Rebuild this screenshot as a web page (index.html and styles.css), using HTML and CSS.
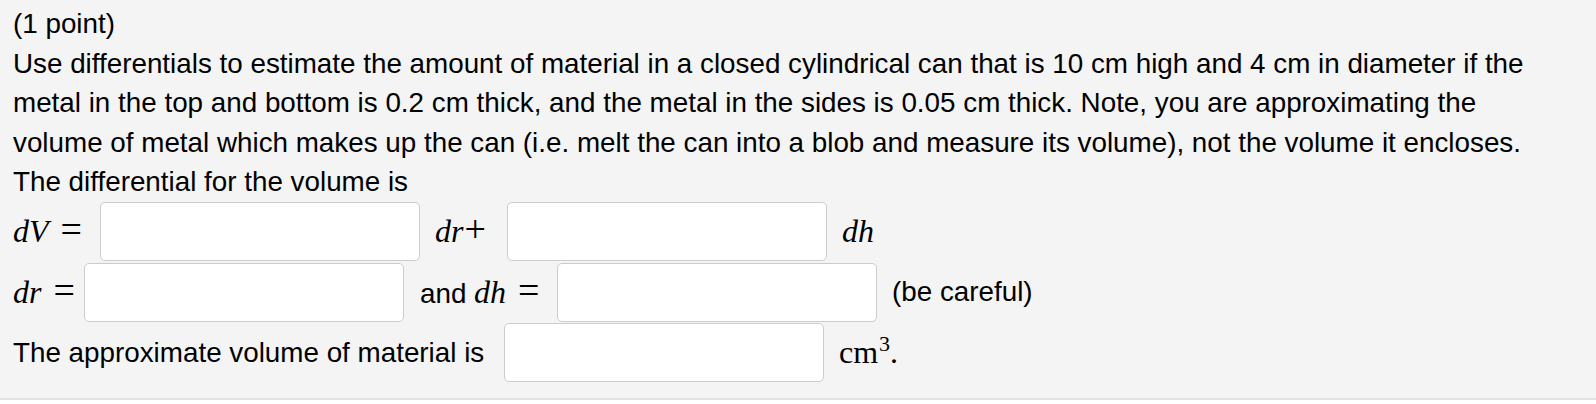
FILE: index.html
```html
<!DOCTYPE html>
<html>
<head>
<meta charset="utf-8">
<link rel="stylesheet" href="styles.css">
</head>
<body>
<div class="problem">
  <div class="text">
    <div>(1 point)</div>
    <div>Use differentials to estimate the amount of material in a closed cylindrical can that is 10 cm high and 4 cm in diameter if the metal in the top and bottom is 0.2 cm thick, and the metal in the sides is 0.05 cm thick. Note, you are approximating the volume of metal which makes up the can (i.e. melt the can into a blob and measure its volume), not the volume it encloses.</div>
    <div>The differential for the volume is</div>
  </div>
  <div class="row">
    <span class="cell w-dv"><span class="m">dV</span><span class="op rel">=</span></span>
    <input class="ans" type="text">
    <span class="cell w-drp"><span class="m">dr</span><span class="op bin">+</span></span>
    <input class="ans" type="text">
    <span class="cell after"><span class="m">dh</span></span>
  </div>
  <div class="row">
    <span class="cell w-dr"><span class="m">dr</span><span class="op rel">=</span></span>
    <input class="ans" type="text">
    <span class="cell w-and">and <span class="m">dh</span><span class="op rel">=</span></span>
    <input class="ans" type="text">
    <span class="cell after">(be careful)</span>
  </div>
  <div class="row">
    <span class="cell w-vol">The approximate volume of material is</span>
    <input class="ans" type="text">
    <span class="cell after unit">cm<sup>3</sup>.</span>
  </div>
</div>
</body>
</html>
```

FILE: styles.css
```css
html, body {
  margin: 0;
  padding: 0;
  background: #ffffff;
}

.problem {
  width: 1596px;
  height: 400px;
  box-sizing: border-box;
  background: #f4f4f4;
  border-bottom: 2px solid #e2e2e2;
  padding: 4px 36px 0 13px;
  font-family: "Liberation Sans", Arial, sans-serif;
  font-size: 27.8px;
  color: #000;
}

.text {
  line-height: 39.5px;
}

.row {
  display: flex;
  align-items: center;
  height: 60.5px;
}

.cell {
  display: block;
  white-space: nowrap;
  flex: none;
}

.m {
  font-family: "Liberation Serif", "Times New Roman", serif;
  font-style: italic;
  font-size: 32px;
}

.op {
  font-family: "Liberation Serif", "Times New Roman", serif;
  font-size: 38px;
  line-height: 0;
}

.rel {
  margin-left: 12px;
}

.bin {
  margin-left: 1px;
}

.w-dv { width: 87px; }
.w-drp { width: 72px; padding-left: 15px; }
.w-dr { width: 71px; }
.w-and { width: 137px; padding-left: 16px; }
.w-vol { width: 491px; }
.after { padding-left: 15px; }

.unit {
  font-family: "Liberation Serif", "Times New Roman", serif;
  font-size: 32px;
}

.unit sup {
  font-size: 22px;
  line-height: 0;
  vertical-align: 12px;
  margin-left: 1px;
}

.ans {
  flex: none;
  width: 320px;
  height: 59px;
  box-sizing: border-box;
  margin: 0;
  padding: 4px 6px;
  border: 1px solid #cccccc;
  border-radius: 5px;
  background: #ffffff;
  font-size: 20px;
  outline: none;
}
```
